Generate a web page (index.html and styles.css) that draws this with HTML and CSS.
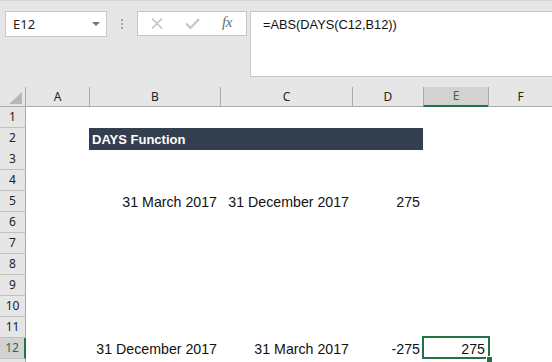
FILE: index.html
```html
<!DOCTYPE html>
<html lang="en">
<head>
    <meta charset="UTF-8">
    <title>DAYS Function</title>
    <link rel="stylesheet" href="styles.css">
</head>
<body>
    <!-- Barra de nombre y fórmula -->
    <div class="toolbar">
        <div class="name-box">
            <span>E12</span>
            <span class="caret"></span>
        </div>
        <div class="grip"><i></i><i></i><i></i></div>
        <div class="fx-buttons">
            <svg class="ico" width="12" height="11" viewBox="0 0 12 11">
                <path d="M1 0.5 L11 10.5 M11 0.5 L1 10.5" stroke="#c4c4c4" stroke-width="1.6" fill="none"/>
            </svg>
            <svg class="ico" width="15" height="11" viewBox="0 0 15 11">
                <path d="M1 5.5 L5.5 10 L14 1" stroke="#c4c4c4" stroke-width="2" fill="none"/>
            </svg>
            <span class="fx">fx</span>
        </div>
        <div class="formula">=ABS(DAYS(C12,B12))</div>
    </div>

    <!-- Hoja -->
    <div class="sheet">
        <div class="row head">
            <div class="corner">
                <svg width="13" height="12" viewBox="0 0 13 12"><polygon points="13,0 13,12 0,12" fill="#b7b7b7"/></svg>
            </div>
            <div class="col first">A</div>
            <div class="col">B</div>
            <div class="col">C</div>
            <div class="col">D</div>
            <div class="col active">E</div>
            <div class="col">F</div>
        </div>

        <div class="row"><div class="rn">1</div><div></div><div></div><div></div><div></div><div></div><div></div></div>
        <div class="row"><div class="rn">2</div><div></div><div class="c band title">DAYS Function</div><div class="c band"></div><div class="c band"></div><div></div><div></div></div>
        <div class="row"><div class="rn">3</div><div></div><div></div><div></div><div></div><div></div><div></div></div>
        <div class="row"><div class="rn">4</div><div></div><div></div><div></div><div></div><div></div><div></div></div>
        <div class="row"><div class="rn">5</div><div></div><div class="c">31 March 2017</div><div class="c">31 December 2017</div><div class="c">275</div><div></div><div></div></div>
        <div class="row"><div class="rn">6</div><div></div><div></div><div></div><div></div><div></div><div></div></div>
        <div class="row"><div class="rn">7</div><div></div><div></div><div></div><div></div><div></div><div></div></div>
        <div class="row"><div class="rn">8</div><div></div><div></div><div></div><div></div><div></div><div></div></div>
        <div class="row"><div class="rn">9</div><div></div><div></div><div></div><div></div><div></div><div></div></div>
        <div class="row"><div class="rn">10</div><div></div><div></div><div></div><div></div><div></div><div></div></div>
        <div class="row"><div class="rn">11</div><div></div><div></div><div></div><div></div><div></div><div></div></div>
        <div class="row"><div class="rn active">12</div><div></div><div class="c">31 December 2017</div><div class="c">31 March 2017</div><div class="c">-275</div><div class="c selected">275<span class="handle"></span></div><div></div></div>
        <div class="row"><div class="rn"></div><div></div><div></div><div></div><div></div><div></div><div></div></div>
    </div>
</body>
</html>
```

FILE: styles.css
```css
/* Hoja de cálculo estilo Excel */
body {
    margin: 0;
    background: #ffffff;
    font-family: "Liberation Sans", Arial, sans-serif;
    overflow: hidden;
}

.toolbar {
    display: flex;
    align-items: flex-start;
    box-sizing: border-box;
    height: 87px;
    padding-top: 10px;
    border-top: 1px solid #d6d6d6;
    background: #e6e6e6;
}

.name-box {
    display: flex;
    align-items: center;
    justify-content: space-between;
    box-sizing: border-box;
    width: 102px;
    height: 26px;
    margin-left: 5px;
    padding: 0 6px 0 7px;
    background: #ffffff;
    border: 1px solid #c6c6c6;
    font-family: "Noto Sans", sans-serif;
    font-size: 13px;
    color: #222222;
}

.caret {
    width: 0;
    height: 0;
    border-left: 4px solid transparent;
    border-right: 4px solid transparent;
    border-top: 4px solid #707070;
}

.grip {
    display: flex;
    flex-direction: column;
    gap: 2px;
    margin: 8px 0 0 14px;
}

.grip i {
    display: block;
    width: 2px;
    height: 2px;
    background: #a9a9a9;
}

.fx-buttons {
    display: flex;
    align-items: center;
    box-sizing: border-box;
    width: 110px;
    height: 25px;
    margin-left: 14px;
    padding-left: 13px;
    background: #ffffff;
    border: 1px solid #c6c6c6;
}

.fx-buttons .ico {
    margin-right: 22px;
}

.fx-buttons svg + svg {
    margin-right: 23px;
}

.fx {
    font-family: "Liberation Serif", serif;
    font-style: italic;
    font-size: 15px;
    color: #6b6b6b;
    letter-spacing: -0.5px;
    margin-top: -3px;
}

.formula {
    flex: 1;
    box-sizing: border-box;
    height: 66px;
    margin-left: 3px;
    padding: 5px 0 0 12px;
    background: #ffffff;
    border: 1px solid #c6c6c6;
    border-right: none;
    font-size: 12.8px;
    color: #111111;
}

.row {
    display: grid;
    grid-template-columns: 26px 63px 131px 132px 71px 65px 1fr;
    height: 21px;
}

.row > div {
    position: relative;
    box-sizing: border-box;
}

.row.head {
    height: 20px;
    background: #e6e6e6;
    border-bottom: 1px solid #ababab;
    box-sizing: border-box;
    font-family: "Noto Sans", sans-serif;
    font-size: 12px;
    color: #222222;
}

.corner {
    display: flex;
    align-items: flex-end;
    justify-content: flex-end;
    padding: 0 3px 3px 0;
    border-right: 1px solid #ababab;
}

.col {
    text-align: center;
    line-height: 19px;
    border-left: 1px solid #ababab;
}

.col.first {
    border-left: none;
}

.col.active {
    background: #d2d2d2;
    color: #217346;
    border-bottom: 2px solid #217346;
    line-height: 18px;
}

.rn {
    background: #e6e6e6;
    border-right: 1px solid #ababab;
    border-bottom: 1px solid #c0c0c0;
    text-align: center;
    line-height: 20px;
    font-family: "Noto Sans", sans-serif;
    font-size: 12px;
    color: #222222;
}

.rn.active {
    background: #d2d2d2;
    color: #217346;
    border-right: 2px solid #217346;
}

.c {
    text-align: right;
    padding: 2px 3px 0 0;
    line-height: 19px;
    font-size: 14.2px;
    color: #111111;
    white-space: nowrap;
}

.band {
    background: #333f4f;
}

.title {
    text-align: left;
    padding-left: 3px;
    font-weight: bold;
    font-size: 13px;
    color: #ffffff;
    line-height: 20px;
}

.selected::before {
    content: "";
    position: absolute;
    top: -2px;
    left: -1px;
    width: 68px;
    height: 23px;
    box-sizing: border-box;
    border: 2px solid #217346;
}

.handle {
    position: absolute;
    left: 63px;
    top: 18px;
    width: 5px;
    height: 5px;
    background: #217346;
    border-left: 1px solid #ffffff;
    border-top: 1px solid #ffffff;
}
```
